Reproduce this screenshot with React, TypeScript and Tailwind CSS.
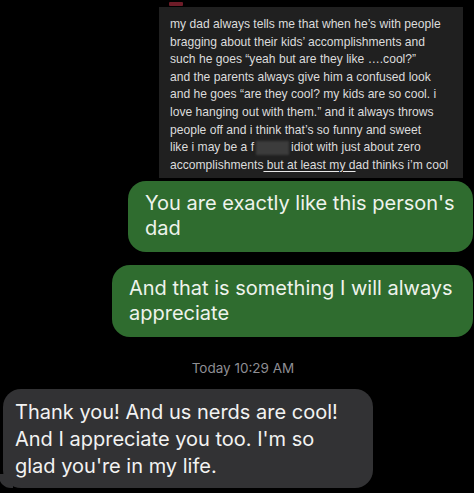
import React from "react";

export default function App() {
  const sf = { fontFamily: "Inter, 'Liberation Sans', sans-serif" };
  return (
    <div className="w-[474px] h-[493px] bg-black overflow-hidden flex flex-col" style={sf}>
      {/* screenshot card */}
      <div className="relative ml-[159px] mt-[7px] w-[304px] h-[171px] bg-[#202020] pl-[11px] pt-[9px] text-[12.1px] leading-[17.6px] text-[#dcdcdc]" style={{ fontFamily: "'Liberation Sans', Arial, sans-serif" }}>
        <div className="absolute left-[10px] -top-[5px] w-[14px] h-[4px] rounded-[1px] bg-[#6e1c28]" />
        <div>my dad always tells me that when he’s with people</div>
        <div>bragging about their kids’ accomplishments and</div>
        <div>such he goes “yeah but are they like ….cool?”</div>
        <div>and the parents always give him a confused look</div>
        <div>and he goes “are they cool? my kids are so cool. i</div>
        <div>love hanging out with them.” and it always throws</div>
        <div>people off and i think that’s so funny and sweet</div>
        <div className="flex items-center">
          <span>like i may be a f</span>
          <span className="inline-block w-[33px] h-[14px] bg-[#3c3c3c] blur-[1px] mx-[2px]" />
          <span>idiot with just about zero</span>
        </div>
        <div>
          accomplishments
          <span className="underline decoration-[#e8e8e8] underline-offset-[2px]"> but at least my d</span>
          ad thinks i’m cool
        </div>
      </div>

      {/* sent bubbles */}
      <div className="flex flex-col items-end pr-[1px] mt-[3px] gap-[13px]">
        <div className="w-[345px] h-[71px] rounded-[18px] bg-[#2f6c2f] pl-[17px] pt-[10px] text-[20px] leading-[25px] text-[#eef3ec]">
          You are exactly like this person's<br />dad
        </div>
        <div className="w-[361px] h-[72px] rounded-[18px] bg-[#2f6c2f] pl-[17px] pt-[11px] text-[20px] leading-[25px] text-[#eef3ec]">
          And that is something I will always<br />appreciate
        </div>
      </div>

      {/* timestamp */}
      <div className="mt-[23px] w-[486px] text-center text-[13.5px] leading-[17px] text-[#8e8e93]">
        Today 10:29 AM
      </div>

      {/* received bubble */}
      <div className="relative mt-[12px] ml-[3px] w-[370px] h-[99px] rounded-[18px] bg-[#323234] pl-[12px] pt-[10px] text-[20px] leading-[27px] text-[#f2f2f2]">
        Thank you! And us nerds are cool!<br />And I appreciate you too. I'm so<br />glad you're in my life.
        <div className="absolute -left-[4px] bottom-0 w-[14px] h-[14px] rounded-bl-[12px] bg-[#323234]" />
      </div>
    </div>
  );
}
